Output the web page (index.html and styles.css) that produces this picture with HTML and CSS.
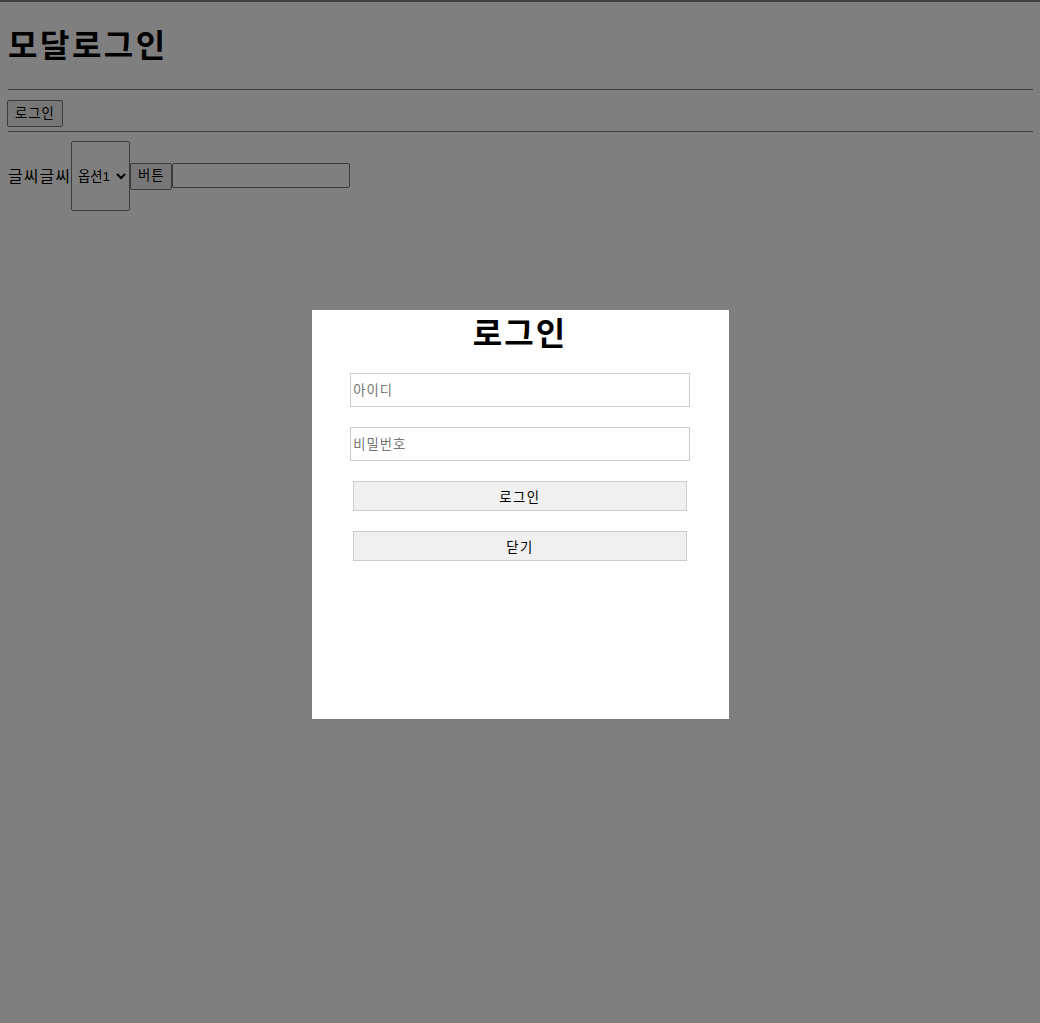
FILE: index.html
```html
<!DOCTYPE html>
<html lang="ko">
<head>
    <meta charset="UTF-8">
    <meta name="viewport" content="width=device-width, initial-scale=1.0">
    <title>모달로그인</title>
    <link rel="stylesheet" href="styles.css">
</head>
<body>
    <div class="topbar"></div>
    <div class="page">
        <h1>모달로그인</h1>
        <hr>
        <div class="row first">
            <button class="btn">로그인</button>
        </div>
        <hr>
        <div class="row">
            <span>글씨글씨</span><select class="sel"><option>옵션1</option></select><button class="btn">버튼</button><input type="text" class="txt">
        </div>
    </div>

    <div class="overlay">
        <div class="modal">
            <h2>로그인</h2>
            <input type="text" class="field" placeholder="아이디">
            <input type="password" class="field" placeholder="비밀번호">
            <button class="modal-btn">로그인</button>
            <button class="modal-btn">닫기</button>
        </div>
    </div>
</body>
</html>
```

FILE: styles.css
```css
body {
    font-family: "Liberation Sans", "Noto Sans CJK KR", sans-serif;
    margin: 0;
    padding: 0;
    background-color: white;
    color: black;
}

.topbar {
    height: 2px;
    background-color: #7c7c7c;
}

.page {
    padding: 0 8px;
}

.page h1 {
    font-size: 32px;
    line-height: 34px;
    letter-spacing: 2.5px;
    margin: 27px 0 26px;
}

.page hr {
    border: 0;
    border-top: 1px solid #7f7f7f;
    height: 0;
    margin: 8px -1px 9px 0;
}

.row {
    font-size: 16px;
    line-height: 23px;
    letter-spacing: 1px;
    display: flex;
    align-items: center;
}

.row.first {
    height: 23px;
    padding-top: 1px;
    align-items: flex-start;
    margin-left: -1px;
}

.btn {
    font-family: inherit;
    font-size: 13.33px;
    line-height: 16px;
    letter-spacing: 1.5px;
    padding: 2px 7px 2px 8px;
    height: 22px;
    background-color: #efefef;
    border: 1px solid #767676;
    border-radius: 2px;
    margin: 0;
    color: black;
}

.sel {
    font-family: inherit;
    font-size: 13.33px;
    height: 70px;
    width: 59px;
    padding: 0 2px;
    margin: 0;
    border: 1px solid #767676;
    border-radius: 2px;
    background-color: white;
    color: black;
}

.row .btn {
    height: 27px;
    padding: 2px 7px;
    letter-spacing: 1px;
}

.txt {
    width: 172px;
    height: 21px;
    padding: 1px 2px;
    margin: 0 0 1px;
    border: 1px solid #767676;
    border-radius: 2px;
    box-sizing: content-box;
}

.overlay {
    position: fixed;
    top: 0;
    left: 0;
    right: 0;
    bottom: 0;
    background-color: rgba(0, 0, 0, 0.5);
    display: flex;
    justify-content: center;
    align-items: flex-start;
    padding-top: 310px;
}

.modal {
    width: 417px;
    height: 409px;
    background-color: white;
    text-align: center;
}

.modal h2 {
    font-size: 32px;
    line-height: 43px;
    letter-spacing: 2px;
    padding-top: 3px;
    margin: 0 0 17px;
}

.field {
    display: block;
    width: 80%;
    height: 16px;
    padding: 8px 2px;
    margin: 0 auto 20px;
    border: 1px solid #ccc;
    font-family: inherit;
    font-size: 13.33px;
    letter-spacing: 1px;
    box-sizing: content-box;
}

.field::placeholder {
    color: #757575;
}

.modal-btn {
    display: block;
    width: 80%;
    height: 30px;
    margin: 0 auto 20px;
    background-color: #f0f0f0;
    border: 1px solid #ccc;
    font-family: inherit;
    font-size: 13.33px;
    letter-spacing: 1.5px;
    color: black;
}
```
